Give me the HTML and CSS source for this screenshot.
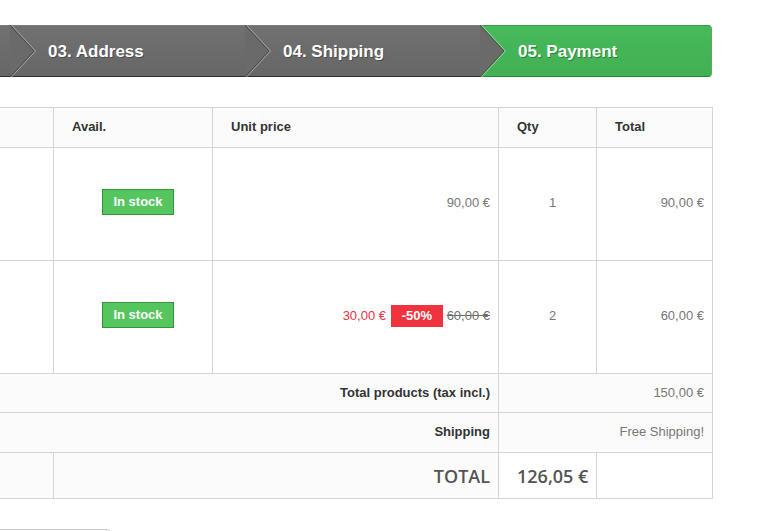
FILE: index.html
```html
<!DOCTYPE html>
<html>
<head>
<meta charset="utf-8">
<link rel="stylesheet" href="styles.css">
</head>
<body>
<div class="page">
  <ul class="steps">
    <li class="step done">
      <svg class="chev" viewBox="0 0 26 52" width="26" height="52"><polygon points="0,0 24,26 0,52" fill="#6b6a6a"/><polyline points="0,0 24,26 0,52" fill="none" stroke="#4a4a4a" stroke-width="1"/><polyline points="1.5,0 25.5,26 1.5,52" fill="none" stroke="#a5a5a5" stroke-width="1"/></svg></li>
    <li class="step done">
      <svg class="chev" viewBox="0 0 26 52" width="26" height="52"><polygon points="0,0 24,26 0,52" fill="#6b6a6a"/><polyline points="0,0 24,26 0,52" fill="none" stroke="#4a4a4a" stroke-width="1"/><polyline points="1.5,0 25.5,26 1.5,52" fill="none" stroke="#a5a5a5" stroke-width="1"/></svg></li>
    <li class="step done"><span class="step-label">03. Address</span>
      <svg class="chev" viewBox="0 0 26 52" width="26" height="52"><polygon points="0,0 24,26 0,52" fill="#6b6a6a"/><polyline points="0,0 24,26 0,52" fill="none" stroke="#4a4a4a" stroke-width="1"/><polyline points="1.5,0 25.5,26 1.5,52" fill="none" stroke="#a5a5a5" stroke-width="1"/></svg></li>
    <li class="step done"><span class="step-label">04. Shipping</span>
      <svg class="chev" viewBox="0 0 26 52" width="26" height="52"><polygon points="0,0 24,26 0,52" fill="#6b6a6a"/><polyline points="0,0 24,26 0,52" fill="none" stroke="#4a4a4a" stroke-width="1"/><polyline points="1.5,0 25.5,26 1.5,52" fill="none" stroke="#9fcfa6" stroke-width="1"/></svg></li>
    <li class="step current"><span class="step-label">05. Payment</span></li>
  </ul>

  <table class="cart">
    <colgroup>
      <col class="c-prod"><col class="c-desc"><col class="c-avail"><col class="c-unit"><col class="c-qty"><col class="c-total">
    </colgroup>
    <thead>
      <tr>
        <th></th>
        <th></th>
        <th>Avail.</th>
        <th>Unit price</th>
        <th>Qty</th>
        <th>Total</th>
      </tr>
    </thead>
    <tbody>
      <tr class="item">
        <td></td>
        <td></td>
        <td class="avail"><span class="label-stock">In stock</span></td>
        <td class="num">90,00 €</td>
        <td class="qty">1</td>
        <td class="num">90,00 €</td>
      </tr>
      <tr class="item">
        <td></td>
        <td></td>
        <td class="avail"><span class="label-stock">In stock</span></td>
        <td class="num"><span class="price-special">30,00 €</span> <span class="label-reduction">-50%</span> <span class="price-old">60,00 €</span></td>
        <td class="qty">2</td>
        <td class="num">60,00 €</td>
      </tr>
    </tbody>
    <tfoot>
      <tr class="sum">
        <td colspan="4" class="sum-label">Total products (tax incl.)</td>
        <td colspan="2" class="num">150,00 €</td>
      </tr>
      <tr class="sum sum-ship">
        <td colspan="4" class="sum-label">Shipping</td>
        <td colspan="2" class="num">Free Shipping!</td>
      </tr>
      <tr class="grand">
        <td colspan="2"></td>
        <td colspan="2" class="grand-label">TOTAL</td>
        <td class="grand-price">126,05 €</td>
        <td class="blank"></td>
      </tr>
    </tfoot>
  </table>

  <div class="actions">
    <span class="btn-back"></span>
  </div>
</div>
</body>
</html>
```

FILE: styles.css
```css
html, body {
  margin: 0;
  padding: 0;
  background: #fff;
  overflow: hidden;
}

body {
  font-family: "Liberation Sans", Arial, sans-serif;
  font-size: 13px;
  color: #777;
}

.page {
  margin-left: -460px;
  width: 1172px;
  padding-top: 25px;
}

.steps {
  list-style: none;
  margin: 0;
  padding: 0;
  display: grid;
  grid-template-columns: repeat(4, 235px) 1fr;
  height: 52px;
}

.step {
  position: relative;
  box-sizing: border-box;
  height: 52px;
}

.step-label {
  display: block;
  padding-left: 38px;
  padding-top: 1px;
  line-height: 50px;
  font-size: 17px;
  font-weight: bold;
  color: #fff;
  white-space: nowrap;
}

.done {
  background: linear-gradient(#727171, #666666);
  border-top: 1px solid #7e7d7d;
  border-bottom: 1px solid #2f2f2f;
}

.done .step-label {
  text-shadow: 1px 1px rgba(0, 0, 0, 0.3);
}

.current {
  background: linear-gradient(#47ba5a, #41b053);
  border: 1px solid;
  border-color: #399b49 #51ae5c #208931 #369946;
  border-left: 0;
  border-radius: 0 4px 4px 0;
}

.current .step-label {
  text-shadow: 1px 1px #208931;
}

.chev {
  position: absolute;
  top: -1px;
  left: 100%;
  z-index: 2;
  display: block;
}

.cart {
  margin-top: 30px;
  width: 1172px;
  table-layout: fixed;
  border-collapse: collapse;
  border: 1px solid #d6d4d4;
}

.c-prod { width: 220px; }
.c-desc { width: 293px; }
.c-avail { width: 159px; }
.c-unit { width: 286px; }
.c-qty { width: 98px; }
.c-total { width: 116px; }

.cart th,
.cart td {
  border: 1px solid #d6d4d4;
  padding: 0 8px 0 18px;
  vertical-align: middle;
}

.cart th {
  background: #fbfbfb;
  color: #333;
  font-weight: bold;
  text-align: left;
  height: 37px;
  padding-bottom: 2px;
}

.item td {
  height: 108px;
  padding-bottom: 4px;
  background: #fff;
}

.avail {
  text-align: center;
}

.label-stock {
  display: inline-block;
  background: #55c65e;
  border: 1px solid #36943e;
  color: #fff;
  font-weight: bold;
  line-height: 18px;
  padding: 3px 10px;
}

.num {
  text-align: right;
}

.qty {
  text-align: center;
}

.price-special {
  color: #f13340;
}

.label-reduction {
  display: inline-block;
  background: #f13340;
  color: #fff;
  font-weight: bold;
  line-height: 16px;
  padding: 3px 11px;
  margin: -4px 0 -4px 1px;
}

.price-old {
  color: #6f6f6f;
  text-decoration: line-through;
}

.sum td {
  background: #fbfbfb;
  height: 36px;
  padding-bottom: 2px;
}

.sum-ship td {
  height: 37px;
}

.sum-label {
  text-align: right;
  color: #333;
  font-weight: bold;
}

.grand td {
  background: #fbfbfb;
  height: 45px;
}

.grand-label {
  text-align: right;
  font-family: "Open Sans", "Liberation Sans", sans-serif;
  font-size: 18px;
  font-weight: 600;
  color: #555454;
}

.cart .grand-price {
  background: #fff;
  font-family: "Open Sans", "Liberation Sans", sans-serif;
  font-size: 18px;
  font-weight: 600;
  color: #555454;
  white-space: nowrap;
}

.cart .blank {
  background: #fff;
}

.actions {
  margin-top: 30px;
  padding-left: 380px;
  height: 3px;
  overflow: hidden;
}

.btn-back {
  display: block;
  box-sizing: border-box;
  width: 191px;
  height: 40px;
  border: 1px solid #cacaca;
  border-radius: 4px;
}
```
